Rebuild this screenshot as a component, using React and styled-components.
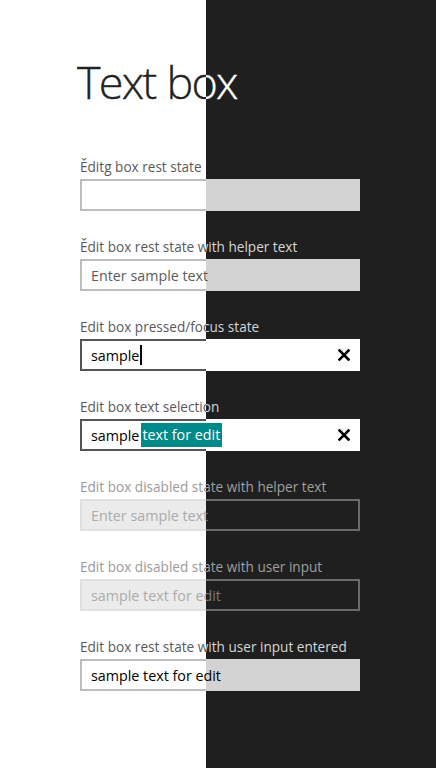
import React from "react";
import styled, { createGlobalStyle, css } from "styled-components";

const Global = createGlobalStyle`
  html, body { margin: 0; padding: 0; }
  body { font-family: "Open Sans", "Noto Sans", sans-serif; }
`;

const themes = {
  light: {
    bg: "#ffffff",
    title: "#222222",
    label: "#5a5a5a",
    labelDisabled: "#9a9a9a",
    restBg: "#ffffff",
    restBorder: "#bdbdbd",
    focusBg: "#ffffff",
    focusBorder: "#555555",
    disBg: "#ebebeb",
    disBorder: "#e0e0e0",
    disText: "#ababab",
    placeholder: "#5c5c5c",
  },
  dark: {
    bg: "#1f1f1f",
    title: "#ffffff",
    label: "#d6d6d6",
    labelDisabled: "#9f9f9f",
    restBg: "#d3d3d3",
    restBorder: "#d3d3d3",
    focusBg: "#ffffff",
    focusBorder: "#ffffff",
    disBg: "transparent",
    disBorder: "#6a6a6a",
    disText: "#7a7a7a",
    placeholder: "#5c5c5c",
  },
};

const Stage = styled.div`
  display: grid;
  width: 436px;
  height: 768px;
  overflow: hidden;
`;

const Layer = styled.div`
  grid-area: 1 / 1;
  background: ${(p) => themes[p.$mode].bg};
  clip-path: ${(p) => (p.$mode === "light" ? "inset(0 230px 0 0)" : "inset(0 0 0 206px)")};
  padding: 54px 0 0 80px;
  box-sizing: border-box;
`;

const Title = styled.h1`
  margin: 0 0 48px -3px;
  font-size: 45px;
  font-weight: 300;
  line-height: 56px;
  color: ${(p) => themes[p.$mode].title};
  letter-spacing: -1.8px;
  word-spacing: 1px;
  -webkit-text-stroke: 0.3px currentColor;
`;

const List = styled.div`
  display: flex;
  flex-direction: column;
  gap: 27px;
`;

const Field = styled.div`
  display: flex;
  flex-direction: column;
  gap: 3px;
`;

const Label = styled.div`
  font-size: 13.6px;
  line-height: 18px;
  color: ${(p) => (p.$disabled ? themes[p.$mode].labelDisabled : themes[p.$mode].label)};
`;

const Box = styled.div`
  box-sizing: border-box;
  width: 280px;
  height: 32px;
  border: 2px solid;
  display: flex;
  align-items: center;
  padding: 0 8px 0 9px;
  font-size: 14.3px;
  color: #000;
  ${(p) => {
    const t = themes[p.$mode];
    if (p.$state === "focus")
      return css`background: ${t.focusBg}; border-color: ${t.focusBorder};`;
    if (p.$state === "disabled")
      return css`background: ${t.disBg}; border-color: ${t.disBorder}; color: ${t.disText};`;
    return css`background: ${t.restBg}; border-color: ${t.restBorder};`;
  }}
`;

const Placeholder = styled.span`
  color: ${(p) => themes[p.$mode].placeholder};
`;

const Value = styled.span`
  white-space: pre;
`;

const Selected = styled.span`
  background: #008a8a;
  color: #fff;
  padding: 2px 2px 2px 1px;
  margin-left: 2px;
  line-height: 20px;
`;

const Caret = styled.span`
  display: inline-block;
  width: 2px;
  height: 20px;
  background: #000;
  margin-left: 1px;
`;

const Clear = styled.span`
  margin-left: auto;
  display: flex;
  align-items: center;
  margin-right: 0;
`;

const XIcon = () => (
  <svg width="12" height="12" viewBox="0 0 12 12">
    <path d="M1.5 1.5 L10.5 10.5 M10.5 1.5 L1.5 10.5" stroke="#000" strokeWidth="2.6" strokeLinecap="square" />
  </svg>
);

const fields = [
  { label: "Ěditg box rest state", state: "rest" },
  { label: "Ědit box rest state with helper text", state: "rest", placeholder: "Enter sample text" },
  { label: "Edit box pressed/focus state", state: "focus", value: "sample", caret: true },
  { label: "Edit box text selection", state: "focus", value: "sample", selected: "text for edit" },
  { label: "Edit box disabled state with helper text", state: "disabled", value: "Enter sample text" },
  { label: "Edit box disabled state with user input", state: "disabled", value: "sample text for edit" },
  { label: "Edit box rest state with user input entered", state: "rest", value: "sample text for edit" },
];

const Content = ({ mode }) => (
  <Layer $mode={mode}>
    <Title $mode={mode}>Text box</Title>
    <List>
      {fields.map((f, i) => (
        <Field key={i}>
          <Label $mode={mode} $disabled={f.state === "disabled"}>{f.label}</Label>
          <Box $mode={mode} $state={f.state}>
            {f.placeholder && <Placeholder $mode={mode}>{f.placeholder}</Placeholder>}
            {f.value && <Value>{f.value}</Value>}
            {f.caret && <Caret />}
            {f.selected && <Selected>{f.selected}</Selected>}
            {f.state === "focus" && (
              <Clear>
                <XIcon />
              </Clear>
            )}
          </Box>
        </Field>
      ))}
    </List>
  </Layer>
);

export default function App() {
  return (
    <>
      <Global />
      <Stage>
        <Content mode="light" />
        <Content mode="dark" />
      </Stage>
    </>
  );
}
